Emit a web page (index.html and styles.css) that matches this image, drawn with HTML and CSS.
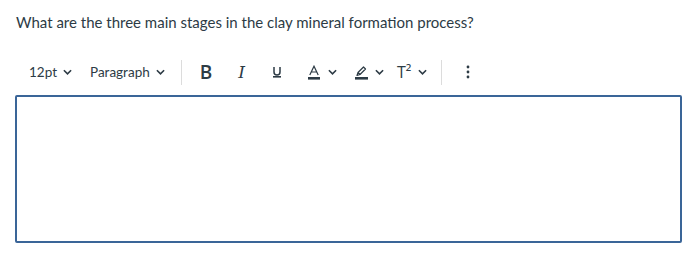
FILE: index.html
```html
<!DOCTYPE html>
<html lang="en">
<head>
  <meta charset="utf-8">
  <title>Question</title>
  <link rel="stylesheet" href="styles.css">
</head>
<body>
  <main class="question">
    <p class="question-text">What are the three main stages in the clay mineral formation process?</p>
    <div class="toolbar">
      <button class="tb-select size">12pt <svg class="chev" viewBox="0 0 10 6"><path d="M1 1l4 4 4-4"/></svg></button>
      <button class="tb-select block">Paragraph <svg class="chev" viewBox="0 0 10 6"><path d="M1 1l4 4 4-4"/></svg></button>
      <span class="sep"></span>
      <button class="tb-btn bold">B</button>
      <button class="tb-btn italic">I</button>
      <button class="tb-btn under">
        <svg viewBox="0 0 10 14" width="10" height="14"><path d="M2 2v5a3 3 0 0 0 6 0V2" fill="none" stroke="#2d3b45" stroke-width="1.5"/><rect x="1" y="11" width="8" height="1.6" fill="#2d3b45"/></svg>
      </button>
      <button class="tb-btn color fore">
        <svg viewBox="0 0 12 15" width="12" height="15"><path d="M1.8 10L6 1.2 10.2 10M3.3 7h5.4" fill="none" stroke="#2d3b45" stroke-width="1.2"/><rect x="0" y="12" width="12" height="2.6" fill="#2d3b45"/></svg>
        <svg class="chev" viewBox="0 0 10 6"><path d="M1 1l4 4 4-4"/></svg>
      </button>
      <button class="tb-btn color back">
        <svg viewBox="0 0 13 15" width="13" height="15"><path d="M2 10.5l1-3L8.5 2l2 2L5 9.5z M3 7.5l2 2" fill="none" stroke="#2d3b45" stroke-width="1.2" stroke-linejoin="round"/><rect x="0" y="12" width="13" height="2.6" fill="#2d3b45"/></svg>
        <svg class="chev" viewBox="0 0 10 6"><path d="M1 1l4 4 4-4"/></svg>
      </button>
      <button class="tb-btn color sup"><span>T²</span>
        <svg class="chev" viewBox="0 0 10 6"><path d="M1 1l4 4 4-4"/></svg>
      </button>
      <span class="sep sep2"></span>
      <button class="tb-btn more">
        <svg viewBox="0 0 4 14" width="4" height="14"><circle cx="2" cy="2" r="1.4"/><circle cx="2" cy="7" r="1.4"/><circle cx="2" cy="12" r="1.4"/></svg>
      </button>
    </div>
    <div class="editor" contenteditable="true"></div>
  </main>
</body>
</html>
```

FILE: styles.css
```css
body {
  margin: 0;
  background-color: #ffffff;
  font-family: Lato, "Open Sans", sans-serif;
  color: #2d3b45;
}
.question {
  padding: 12px 15px 0 15px;
  width: 667px;
}
.question-text {
  margin: 0 0 0 1px;
  font-size: 15px;
  line-height: 20px;
}
.toolbar {
  display: flex;
  align-items: center;
  height: 28px;
  margin-top: 26px;
  padding-left: 14px;
}
button {
  background: none;
  border: none;
  padding: 0;
  margin: 0;
  font-family: Lato, "Open Sans", sans-serif;
  color: #2d3b45;
  cursor: pointer;
  display: flex;
  align-items: center;
}
.chev {
  width: 9px;
  height: 6px;
  fill: none;
  stroke: #2d3b45;
  stroke-width: 1.8;
}
.tb-select {
  font-size: 13.5px;
  gap: 6px;
}
.size {
  margin-right: 18px;
}
.sep {
  width: 1px;
  height: 25px;
  background-color: #dcdcdc;
  margin-left: 16px;
}
.tb-btn {
  font-size: 17px;
}
.bold {
  margin-left: 18px;
  font-family: "Open Sans", sans-serif;
  font-weight: 600;
  font-size: 19px;
}
.italic {
  margin-left: 26px;
  font-family: "DejaVu Serif", serif;
  font-style: italic;
  font-weight: 300;
  font-size: 17px;
}
.under {
  margin-left: 27px;
}
.color {
  gap: 8px;
}
.fore {
  margin-left: 26px;
}
.back {
  margin-left: 18px;
  gap: 7px;
}
.sup {
  margin-left: 13px;
  gap: 7px;
  font-size: 16px;
  font-family: "Open Sans", sans-serif;
}
.sep2 {
  margin-left: 14px;
}
.more {
  margin-left: 24px;
  fill: #2d3b45;
}
.editor {
  margin-top: 9px;
  height: 144px;
  border: 2px solid #3a6598;
  border-radius: 2px;
}
```
